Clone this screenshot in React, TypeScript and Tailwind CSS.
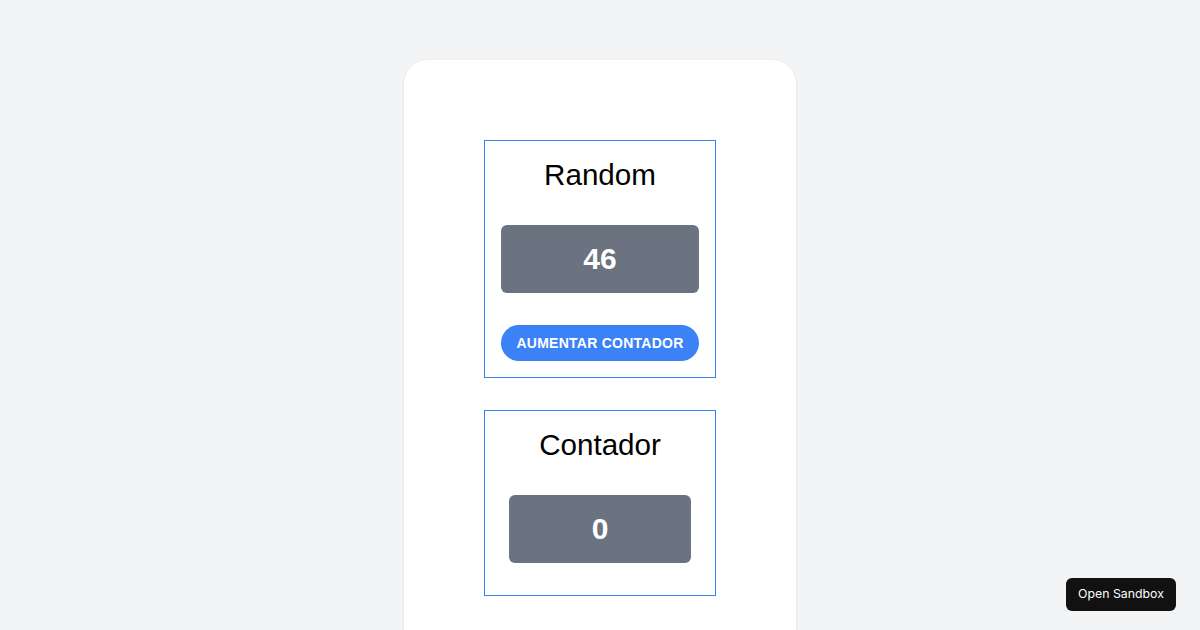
import React from "react";

export default function App() {
  return (
    <div className="min-h-screen w-full bg-[#f3f4f6] relative overflow-hidden" style={{ height: 630 }}>
      <div className="flex justify-center pt-[60px]">
        <div className="w-[392px] h-[620px] bg-white rounded-3xl shadow-sm flex flex-col items-center pt-[80px] gap-8 font-['Liberation_Sans',Arial,sans-serif]">
          <div className="w-[232px] border border-[#3b82f6] flex flex-col items-center px-4 pt-4 pb-4">
            <h2 className="text-[29.6px] leading-9 text-black">Random</h2>
            <div className="mt-8 w-[198px] h-[68px] rounded-md bg-[#6b7280] flex items-center justify-center text-white font-bold text-3xl">46</div>
            <button className="mt-8 w-[198px] h-9 rounded-full bg-[#3b82f6] text-white font-bold text-sm tracking-[0.25px] uppercase">Aumentar contador</button>
          </div>
          <div className="w-[232px] border border-[#3b82f6] flex flex-col items-center px-4 pt-4 pb-8">
            <h2 className="text-[29.6px] leading-9 text-black">Contador</h2>
            <div className="mt-8 w-[182px] h-[68px] rounded-md bg-[#6b7280] flex items-center justify-center text-white font-bold text-3xl">0</div>
          </div>
        </div>
      </div>
      <button className="absolute right-[24px] bottom-[19px] w-[110px] h-[33px] rounded-md bg-[#111111] text-white text-[12.3px] font-['Inter',sans-serif]">Open Sandbox</button>
    </div>
  );
}
